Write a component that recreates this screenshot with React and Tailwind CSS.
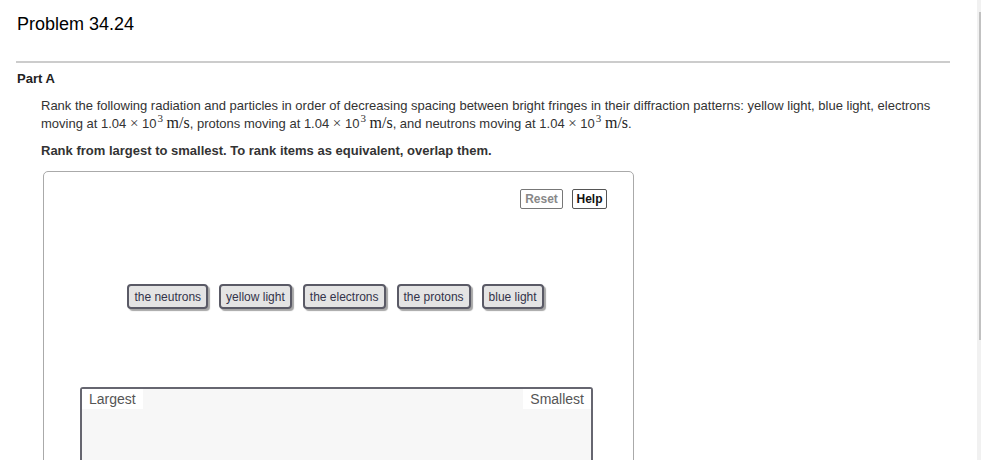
import React from "react";

const items = ["the neutrons", "yellow light", "the electrons", "the protons", "blue light"];

function Speed() {
  return (
    <span className="whitespace-nowrap">
      1.04{" "}
      <span className="font-['Liberation_Serif',serif] text-[15px] leading-none">×</span> 10
      <span className="font-['Liberation_Serif',serif] text-[11px] ml-px relative -top-[6px] leading-none">3</span>{" "}
      <span className="font-['Liberation_Serif',serif] text-[16px] leading-none text-[#222]">m/s</span>
    </span>
  );
}

export default function App() {
  return (
    <div className="flex h-[460px] overflow-hidden bg-white font-['Liberation_Sans',Arial,sans-serif]">
      <div className="flex-1 pl-4 pr-[27px]">
        {/* Heading */}
        <h1 className="pt-[13px] pl-px text-[18px] leading-[22px] text-black">Problem 34.24</h1>
        <div className="mt-[26px] h-[2px] bg-[#cccccc]" />

        {/* Part A */}
        <h2 className="mt-[8px] pl-px text-[13px] leading-[16px] font-bold text-[#222]">Part A</h2>

        <div className="pl-[25px]">
          <p className="mt-[10px] text-[13px] leading-[18px] text-[#333]">
            Rank the following radiation and particles in order of decreasing spacing between bright fringes in their diffraction patterns: yellow light, blue light, electrons moving at <Speed />, protons moving at <Speed />, and neutrons moving at <Speed />.
          </p>
          <p className="mt-[9px] text-[13px] leading-[18px] font-bold text-[#333]">
            Rank from largest to smallest. To rank items as equivalent, overlap them.
          </p>

          {/* Ranking widget */}
          <div className="mt-[11px] ml-[2px] w-[591px] h-[320px] border border-[#aaaaaa] rounded-[5px]">
            <div className="flex justify-end gap-[9px] pt-[17px] pr-[26px]">
              <button className="h-[20px] w-[43px] border border-[#777] rounded-[2px] bg-white text-[12px] font-bold text-[#888]">
                Reset
              </button>
              <button className="h-[20px] w-[35px] border border-[#555] rounded-[2px] bg-white text-[12px] font-bold text-[#111]">
                Help
              </button>
            </div>

            <div className="mt-[75px] flex justify-center gap-[11px] pr-[6px]">
              {items.map((t) => (
                <div
                  key={t}
                  className="h-[25px] px-[5px] flex items-center border-2 border-[#5a5a66] rounded-[4px] bg-[#e4e4e4] text-[12px] text-[#33334a] shadow-[2px_2px_1px_rgba(0,0,0,0.35)]"
                >
                  {t}
                </div>
              ))}
            </div>

            <div className="mt-[78px] mx-auto w-[513px] h-[130px] border-2 border-[#666670] rounded-[3px] bg-[#f7f7f7] -translate-x-[2px]">
              <div className="flex justify-between">
                <span className="bg-white px-[7px] h-[20px] leading-[20px] text-[14px] text-[#555]">Largest</span>
                <span className="bg-white px-[7px] h-[20px] leading-[20px] text-[14px] text-[#555]">Smallest</span>
              </div>
            </div>
          </div>
        </div>
      </div>

      {/* scrollbar */}
      <div className="w-[4px] h-full bg-[#f1f1f1]">
        <div className="ml-[2px] mt-[12px] w-[2px] h-[328px] bg-[#c1c1c1]" />
      </div>
    </div>
  );
}
